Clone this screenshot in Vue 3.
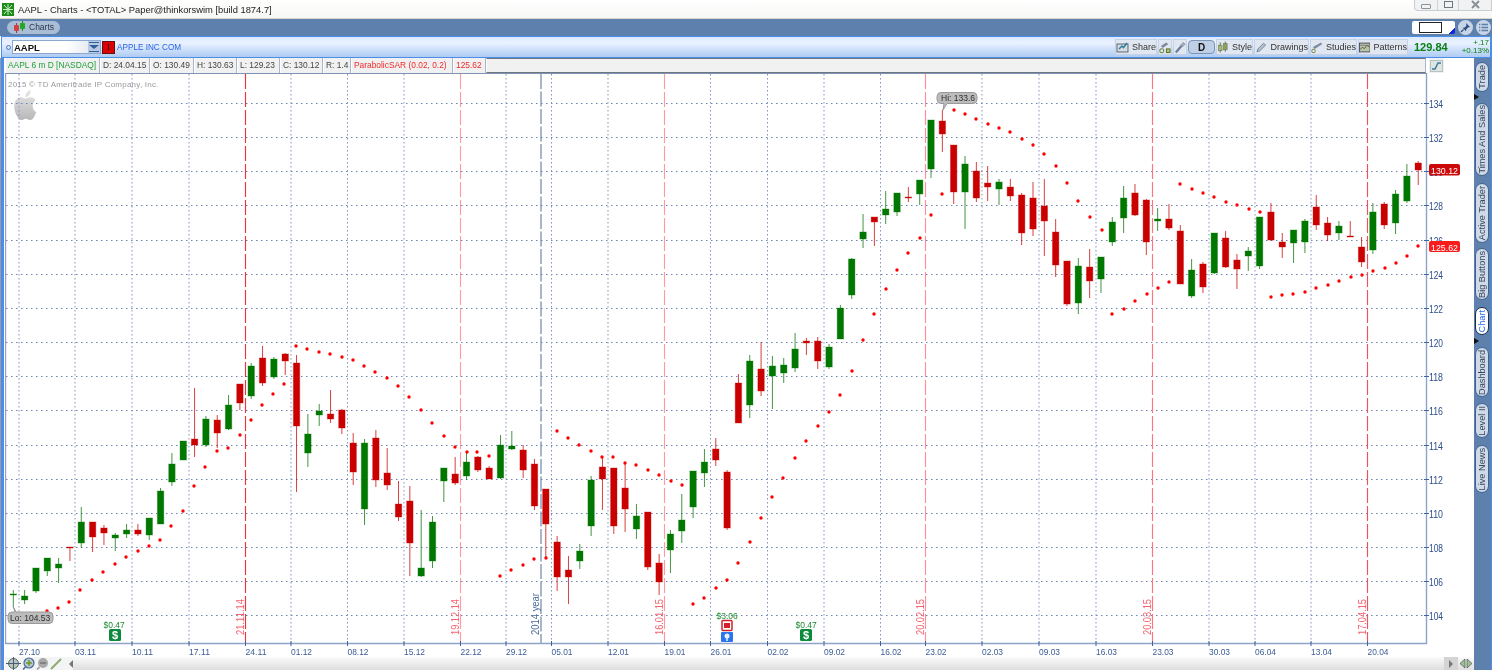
<script setup>
const raw = `g 594 595 590 606|g 596 600 590 604|g 568 591 568 593|g 558 571 558 576|g 564 568 558 583|r 547 548 547 561|g 522 543 507 548|r 522 537 522 552|r 528 533 525 545|g 535 538 533 551|g 530 534 524 538|r 530 534 524 536|g 518 535 518 540|g 491 524 488 524|g 464 482 453 486|g 441 460 441 460|r 439 445 388 457|g 419 445 416 447|r 420 433 415 448|g 405 429 395 430|r 384 403 384 410|g 366 396 363 399|r 358 383 346 386|g 359 377 357 379|r 354 361 353 375|r 363 426 355 492|g 434 453 414 467|g 411 415 404 426|r 414 419 390 423|r 410 428 409 434|r 443 472 433 485|g 443 509 439 525|r 438 480 430 487|r 473 485 448 490|r 504 517 481 521|r 501 543 486 576|g 568 576 510 577|g 522 561 516 568|g 468 481 468 502|r 474 483 457 485|g 462 476 453 480|r 457 470 456 472|r 468 479 466 479|g 445 478 435 479|g 446 449 431 450|r 450 470 445 478|r 464 506 459 510|r 489 524 489 558|r 542 577 536 591|r 570 577 556 604|g 551 561 544 569|g 480 526 476 536|r 467 479 457 510|r 468 526 468 534|r 488 509 464 532|g 516 529 504 539|r 512 567 512 570|r 563 582 554 595|g 534 550 530 573|g 520 531 494 543|g 471 507 471 518|g 462 473 449 487|r 449 460 438 466|r 472 528 470 530|r 383 423 374 423|g 361 405 355 418|r 369 391 342 396|g 366 376 356 409|g 365 373 358 383|g 349 368 333 372|r 341 343 338 355|r 341 361 337 369|g 347 367 344 369|g 308 339 305 339|g 259 295 258 299|g 232 239 214 248|r 217 222 217 246|g 209 215 191 224|g 193 212 193 216|r 197 198 187 202|g 180 194 180 205|g 120 169 120 178|r 121 134 110 152|r 145 192 145 204|g 164 192 156 229|r 171 198 162 202|r 183 187 166 201|g 182 189 179 205|r 187 196 179 201|r 195 233 193 245|r 198 229 182 236|r 206 221 179 256|r 232 265 219 277|r 261 304 261 306|g 266 303 258 314|r 267 281 249 298|g 257 279 257 293|g 222 242 217 246|g 198 218 186 233|r 193 215 184 216|r 200 242 199 255|g 219 221 208 231|r 219 228 204 230|r 231 284 225 284|g 270 296 259 298|r 264 287 262 293|g 233 273 233 274|r 238 267 231 268|r 260 269 254 289|g 251 256 247 271|g 217 266 217 269|r 212 240 203 241|r 242 247 233 258|g 230 243 230 263|g 221 242 219 253|r 207 225 195 230|r 223 235 217 241|g 226 233 221 240|r 236 237 221 237|r 247 262 237 267|g 212 250 203 254|r 204 225 202 229|g 194 223 190 234|g 176 201 164 203|r 163 170 161 185`
const candles = raw.split('|').map((s, i) => {
  const [c, t, b, wt, wb] = s.split(' ')
  return { id: i, x: 13.3 + i * 11.33, c, t: +t, b: +b, wt: +wt, wb: +wb }
})
const sar = `47,611 58,608 69,602 80,590 92,580 103,572 115,564 126,557 138,551 149,546 160,540 171,526 183,511 194,486 205,467 217,451 228,448 240,435 251,420 262,405 273,394 284,384 296,346 307,349 319,352 330,354 342,357 353,360 364,366 375,372 387,378 398,386 409,397 421,410 432,423 444,436 455,447 467,452 477,452 489,456 500,576 511,570 523,565 534,559 546,558 557,431 568,438 579,445 591,451 602,457 613,457 625,463 636,465 648,470 659,475 671,481 682,485 693,604 704,598 716,588 727,580 738,563 750,542 761,518 772,497 783,478 795,458 806,441 818,426 829,412 840,395 852,371 863,340 874,314 886,289 897,270 908,253 920,238 931,215 942,194 954,110 965,114 976,119 988,124 999,128 1010,132 1022,139 1033,145 1044,154 1056,166 1067,183 1078,201 1090,217 1102,230 1112,314 1124,309 1135,301 1147,294 1158,288 1169,282 1180,184 1192,189 1203,193 1214,197 1226,202 1237,205 1249,209 1260,212 1271,297 1282,295 1293,294 1305,292 1316,288 1328,285 1339,281 1351,277 1362,275 1373,271 1385,268 1396,263 1407,256 1418,246`
  .split(' ').map(p => p.split(',').map(Number))
const prices = Array.from({ length: 16 }, (_, i) => {
  const p = 134 - i * 2
  return { p, y: Math.round(103 + i * 34.15) + 0.5 }
})
const dates = [['27.10',19],['03.11',75],['10.11',132],['17.11',189],['24.11',245.5],['01.12',291],['08.12',347.5],['15.12',404],['22.12',460.5],['29.12',506],['05.01',551.5],['12.01',608],['19.01',664.5],['26.01',710.5],['02.02',767.5],['09.02',824],['16.02',880.5],['23.02',925.5],['02.03',982],['09.03',1039],['16.03',1096],['23.03',1152.5],['30.03',1209],['06.04',1255],['13.04',1311],['20.04',1367.5]]
const redLines = [[245.5,'#ec3340','21.11.14'],[460.5,'#ff9aa2','19.12.14'],[664.5,'#ff9aa2','16.01.15'],[925.5,'#ff8f98','20.02.15'],[1152.5,'#ff7480','20.03.15'],[1367.5,'#f3505e','17.04.15']]
const redX = new Set(redLines.map(r => r[0]))
const grid = dates.map(d => d[1]).filter(x => !redX.has(x))
const cells = [
  ['AAPL 6 m D [NASDAQ]', 'g', 95], ['D: 24.04.15', '', 50], ['O: 130.49', '', 44], ['H: 130.63', '', 43], ['L: 129.23', '', 43], ['C: 130.12', '', 43], ['R: 1.4', '', 28], ['ParabolicSAR (0.02, 0.2)', 'r', 102], ['125.62', 'r', 33]
]
const tabs = [['Trade', 30, 11], ['Times And Sales', 73, 7], ['Active Trader', 60, 5], ['Big Buttons', 52, 7], ['Chart', 28, 12], ['Dashboard', 50, 6], ['Level II', 35, 7], ['Live News', 48, 0]]
</script>

<template>
  <div class="app">
    <header class="title">
      <svg class="logo" width="12" height="13" viewBox="0 0 12 13">
        <rect width="12" height="13" fill="#1a8a1a" />
        <path d="M2 2l8 9M10 2L2 11M6 1v11M1 6.5h10" stroke="#c8f0c0" stroke-width="1" />
      </svg>
      <span class="title-text">AAPL - Charts - &lt;TOTAL&gt; Paper@thinkorswim [build 1874.7]</span>
      <div class="winctl">
        <span class="wbtn w1"><i class="min"></i></span>
        <span class="wbtn w2"><i class="rest"></i></span>
        <span class="wbtn w3">
          <svg width="9" height="9" viewBox="0 0 9 9"><path d="M1 1l7 7M8 1L1 8" stroke="#8b9097" stroke-width="2" fill="none" /></svg>
        </span>
      </div>
    </header>

    <div class="tabbar">
      <div class="pill">
        <svg width="13" height="13" viewBox="0 0 13 13">
          <path d="M3.5 2v10" stroke="#b33" /><rect x="1" y="4" width="5" height="6" rx="1" fill="#c44" />
          <path d="M9.5 0v10" stroke="#282" /><rect x="7" y="2" width="5" height="6" rx="1" fill="#2a2" />
        </svg>
        <span>Charts</span>
      </div>
      <div class="spacer"></div>
      <div class="colorbox"><i></i></div>
      <span class="round">
        <svg width="11" height="11" viewBox="0 0 11 11"><path d="M6 1l4 4-2 .6-1.700 1.700-.3 2L2.700 5.700l2-.3L6.400 3.700z" fill="#2d4f80" /><path d="M3.500 7.500L1 10" stroke="#2d4f80" stroke-width="1.200" /></svg>
      </span>
      <span class="round">
        <svg width="11" height="11" viewBox="0 0 11 11"><path d="M3.500 2.500H10M3.500 5.500H10M3.500 8.500H10" stroke="#5d7fab" stroke-width="1.500" /><path d="M1 2.500h1.300M1 5.500h1.300M1 8.500h1.300" stroke="#5d7fab" stroke-width="1.500" /></svg>
      </span>
    </div>

    <div class="toolbar">
      <i class="dot"></i>
      <div class="symbol"><b>AAPL</b><span class="drop">
        <svg width="12" height="11" viewBox="0 0 12 11"><path d="M1 0h10v1H1zM1 3h10L6 7zM1 9h10v1H1z" fill="#345f96" /></svg>
      </span></div>
      <span class="flag">1</span>
      <span class="company">APPLE INC COM</span>
      <div class="spacer"></div>
      <div class="tools">
        <span class="tb" style="width: 42px">
          <svg width="13" height="12" viewBox="0 0 13 12"><rect x="1" y="3" width="11" height="8" fill="#d8dde4" stroke="#5b6776" /><path d="M3 8l3-3 1.500 1.500L11 2" stroke="#2e7d9a" stroke-width="1.500" fill="none" /></svg>
          Share</span>
        <span class="tb" style="width: 14px">
          <svg width="13" height="13" viewBox="0 0 13 13"><path d="M2 5l6-4 2 2-6 4z" fill="#7b8aa0" /><rect x="1" y="8" width="4" height="4" rx="1" fill="none" stroke="#587021" /><rect x="8" y="8" width="4" height="4" fill="#a8c080" stroke="#587021" /></svg>
        </span>
        <span class="tb" style="width: 14px">
          <svg width="13" height="13" viewBox="0 0 13 13"><path d="M2 12l6-7" stroke="#6c7e95" stroke-width="2.500" /><path d="M7 4l3-3 2 2-3 3z" fill="#a2b0c0" stroke="#66738a" stroke-width=".6" /></svg>
        </span>
        <span class="dbtn">D</span>
        <span class="tb" style="width: 37px">
          <svg width="13" height="13" viewBox="0 0 13 13"><path d="M3.500 1v11M9 0v11" stroke="#5a6a50" /><rect x="1.500" y="4" width="4" height="6" fill="#a8b878" stroke="#67754f" stroke-width=".6" /><rect x="7" y="2" width="4" height="7" fill="#8fa05e" stroke="#67754f" stroke-width=".6" /></svg>
          Style</span>
        <span class="tb" style="width: 55px">
          <svg width="13" height="13" viewBox="0 0 13 13"><path d="M2 11l1-3 6-6 2 2-6 6z" fill="#b3c0d0" stroke="#55677f" stroke-width=".7" /></svg>
          Drawings</span>
        <span class="tb" style="width: 47px">
          <svg width="13" height="13" viewBox="0 0 13 13"><path d="M2 6l9-5 1 2-8 5z" fill="#7c8ba3" /><rect x="1" y="8.500" width="3.500" height="3.500" rx="1" fill="none" stroke="#6c7f3a" /></svg>
          Studies</span>
        <span class="tb" style="width: 50px">
          <svg width="13" height="13" viewBox="0 0 13 13"><rect x=".5" y="1.500" width="12" height="10" fill="#b9c4a6" stroke="#445" /><path d="M1 9l3-3 2 2 3-4 3 2" stroke="#553" fill="none" /><path d="M1 4h11" stroke="#778" /></svg>
          Patterns</span>
      </div>
      <b class="last">129.84</b>
      <div class="change"><span>+.17</span><span>+0.13%</span></div>
    </div>

    <div class="body">
      <main class="main">
        <div class="inforow">
          <span v-for="c in cells" :key="c[0]" class="cell" :class="c[1]" :style="{ width: c[2] + 'px' }">{{ c[0] }}</span>
          <span class="cell rest"></span>
          <span class="modebtn">
            <svg width="13" height="12" viewBox="0 0 13 12"><rect x=".5" y=".5" width="12" height="11" fill="#dfe7dd" stroke="#b7c0c8" /><path d="M2 9h3l3-6h3" stroke="#3a78a8" stroke-width="1.500" fill="none" /></svg>
          </span>
        </div>
        <svg class="chart" width="1469" height="584" viewBox="5 73 1469 584">
          <defs>
            <linearGradient id="ap" x1="0" y1="0" x2="0" y2="1">
              <stop offset="0" stop-color="#e6e6e6" /><stop offset="1" stop-color="#b8b8b8" />
            </linearGradient>
          </defs>

          <text class="copy" x="8" y="87">2015 © TD Ameritrade IP Company, Inc.</text>
          <path transform="translate(7.900 85) scale(1.450 1.670)" fill="url(#ap)" d="M17.050 20.280c-.98.95-2.050.8-3.080.35-1.090-.46-2.090-.48-3.240 0-1.440.62-2.200.44-3.060-.35C2.790 15.250 3.510 7.590 9.050 7.310c1.350.07 2.290.74 3.080.8 1.180-.24 2.310-.93 3.570-.84 1.510.12 2.650.72 3.400 1.800-3.120 1.870-2.380 5.980.48 7.130-.57 1.500-1.310 2.990-2.540 4.090zM12.030 7.250c-.15-2.230 1.660-4.070 3.740-4.250.29 2.580-2.340 4.500-3.740 4.250z" />

          <line v-for="p in prices" :key="'h' + p.p" class="hgrid" x1="6" x2="1426" :y1="p.y" :y2="p.y" />
          <line v-for="x in grid" :key="'v' + x" class="vgrid" :x1="x" :x2="x" y1="74" y2="643" />
          <line v-for="r in redLines" :key="r[2]" class="vred" :stroke="r[1]" :x1="r[0]" :x2="r[0]" y1="74" y2="643" />
          <line class="vblue" x1="541" x2="541" y1="74" y2="643" />

          <g v-for="c in candles" :key="c.id">
            <line class="wick" :class="c.c" :x1="c.x" :x2="c.x" :y1="c.wt" :y2="c.wb" />
            <rect class="bodyc" :class="c.c" :x="c.x - 3.200" :y="c.t" width="6.400" :height="c.b - c.t" />
          </g>
          <circle v-for="(d, i) in sar" :key="'s' + i" :cx="d[0]" :cy="d[1]" r="1.700" fill="#ff0000" />

          <line class="axis" x1="5.500" x2="5.500" y1="73" y2="643" />
          <line class="axis" x1="5" x2="1427" y1="643.500" y2="643.500" />
          <line class="axis" x1="1426.500" x2="1426.500" y1="73" y2="644" />
          <line class="topline" x1="5" x2="1427" y1="73.500" y2="73.500" />
          <g v-for="p in prices" :key="'t' + p.p">
            <line class="tick" x1="1424" x2="1429" :y1="p.y" :y2="p.y" />
            <text class="axlabel" x="1429" :y="p.y + 4" textLength="14" lengthAdjust="spacingAndGlyphs">{{ p.p }}</text>
          </g>
          <rect x="1429" y="164" width="31" height="11.500" rx="2" fill="#cc0a0a" />
          <text class="pricetag" x="1431" y="173.500" textLength="27" lengthAdjust="spacingAndGlyphs">130.12</text>
          <rect x="1429" y="241" width="31" height="11" rx="2" fill="#f81c1c" />
          <text class="pricetag" x="1431" y="250.500" textLength="27" lengthAdjust="spacingAndGlyphs">125.62</text>

          <g v-for="d in dates" :key="d[0]">
            <line class="tick" :x1="d[1]" :x2="d[1]" y1="641" y2="646" />
            <text class="dlabel" :x="d[1]" y="654.500" textLength="21" lengthAdjust="spacingAndGlyphs">{{ d[0] }}</text>
          </g>
          <text v-for="r in redLines" :key="'l' + r[2]" class="vlabel" :transform="`translate(${r[0] - 2} 635) rotate(-90)`" textLength="36" lengthAdjust="spacingAndGlyphs">{{ r[2] }}</text>
          <text class="vlabel bl" transform="translate(538.500 635) rotate(-90)" textLength="42" lengthAdjust="spacingAndGlyphs">2014 year</text>

          <text class="ev" x="103.500" y="628">$0.47</text>
          <rect x="109" y="629" width="12" height="12" rx="1.500" fill="#0a8a3c" />
          <text class="evs" x="115" y="639">$</text>
          <text class="ev" x="716.500" y="619">$3.06</text>
          <rect x="722" y="620.500" width="10" height="10" rx="1" fill="#fff" stroke="#d4202a" stroke-width="1.500" />
          <rect x="724" y="623" width="6" height="5" fill="#d4202a" />
          <rect x="721" y="632" width="12" height="10" rx="1" fill="#2a74f0" />
          <circle cx="727" cy="636" r="2.500" fill="#e8f2ff" /><path d="M727 638v3" stroke="#e8f2ff" stroke-width="1.500" />
          <text class="ev" x="795.500" y="628">$0.47</text>
          <rect x="800" y="629" width="12" height="12" rx="1.500" fill="#0a8a3c" />
          <text class="evs" x="806" y="639">$</text>

          <path class="bubble" d="M13 606 l3 6 h33 q4 0 4 4 v3.500 q0 4-4 4 H12 q-4 0-4-4 V616 q0-4 4-4 h3z" />
          <text class="bubtext" x="10" y="621">Lo: 104.53</text>
          <path class="bubble" d="M943 110 l1-6.500 h-3 q-4 0-4-4 v-3 q0-4 4-4 h32 q4 0 4 4 v3 q0 4-4 4 h-26z" />
          <text class="bubtext" x="941" y="100.700">Hi: 133.6</text>
        </svg>
        <footer class="bottombar">
          <div class="bl-tools">
            <svg width="17" height="13" viewBox="0 0 17 13"><circle cx="8.500" cy="6.500" r="5" fill="#b7c4c2" stroke="#5a6d66" /><path d="M8.500 0v13M1 6.500h15" stroke="#4a5d6e" /></svg>
            <svg width="14" height="13" viewBox="0 0 14 13"><circle cx="7" cy="6" r="5" fill="#b6c6d6" stroke="#486b93" stroke-width="1.200" /><path d="M7 3v6M4 6h6" stroke="#6f9a26" stroke-width="1.500" /><path d="M3.500 10L1 12.500" stroke="#486b93" stroke-width="1.500" /></svg>
            <svg width="13" height="13" viewBox="0 0 13 13"><circle cx="7" cy="6" r="5" fill="#a8a8a8" /><path d="M4 6h6" stroke="#777" stroke-width="1.500" /><path d="M3.500 10L1 12.500" stroke="#999" stroke-width="1.500" /></svg>
            <svg class="pen" width="14" height="13" viewBox="0 0 14 13"><path d="M2 12L12 2" stroke="#8fa86c" stroke-width="2" /></svg>
            <span class="tri left"></span>
          </div>
          <div class="spacer"></div>
          <span class="scrollbtn"><span class="tri right"></span></span>
          <svg width="12" height="13" viewBox="0 0 12 13"><path d="M5 2L0 6.500 5 11zM7 2l5 4.500L7 11z" fill="#9fc183" stroke="#456" stroke-width=".7" /></svg>
        </footer>
      </main>
      <aside class="side">
        <i class="mark m1"></i><i class="mark m2"></i>
        <span v-for="t in tabs" :key="t[0]" class="vtab" :class="{ on: t[0] === 'Chart' }" :style="{ height: t[1] + 'px', marginBottom: t[2] + 'px' }"><span>{{ t[0] }}</span></span>
      </aside>
    </div>
  </div>
</template>

<style>
html, body { margin: 0; background: #fff; overflow: hidden; }
</style>

<style scoped>
.app {
  width: 1492px; height: 670px; display: flex; flex-direction: column; overflow: hidden;
  font-family: "Liberation Sans", Arial, sans-serif; color: #333; background: #fff;
  filter: blur(0.35px);
}
.spacer { flex: 1; }
.title {
  height: 18px; flex: none; display: flex; align-items: center; padding-left: 2px; gap: 4px; position: relative;
  background: linear-gradient(#fff, #f6f6f5); border-bottom: 1px solid #d9d5cc;
}
.title-text { font-size: 9.4px; color: #222; letter-spacing: 0; }
.winctl {
  position: absolute; right: 0; top: -1px; width: 78px; height: 12px; display: flex;
  border: 1px solid #c9cdd2; border-top: 0; border-radius: 0 0 0 4px; background: #f1f2f3; box-sizing: border-box;
}
.wbtn { display: flex; align-items: center; justify-content: center; border-right: 1px solid #cfd3d6; }
.w1 { width: 22px; } .w2 { width: 20px; } .w3 { flex: 1; border-right: 0; }
.min { width: 8px; height: 3px; border: 1px solid #8d9299; border-radius: 1px; margin-top: 3px; }
.rest { width: 7px; height: 5px; border: 1px solid #70767e; }

.tabbar {
  height: 17px; flex: none; display: flex; align-items: center; background: #5d80ad; padding: 0 1px 1px 7px; box-sizing: border-box; gap: 0;
}
.pill {
  width: 53px; height: 13px; border-radius: 7px; background: #a9bdd6; display: flex; align-items: center; gap: 3px; padding-left: 6px; box-sizing: border-box;
  font-size: 8.5px; color: #2c3a4e;
}
.colorbox {
  width: 43px; height: 13px; position: relative; border-radius: 2px; margin-right: 3px;
  background: linear-gradient(135deg, #fff 88%, #1028e0 88%);
}
.colorbox i { position: absolute; left: 7px; top: 1px; width: 21px; height: 9px; border: 1px solid #222; }
.round { width: 15px; height: 15px; border-radius: 50%; background: #c7d5e6; display: flex; align-items: center; justify-content: center; }
.round + .round { margin-left: 3px; }

.toolbar {
  height: 20px; flex: none; display: flex; align-items: center; padding-left: 4px; padding-right: 1px;
  background: linear-gradient(#dbe9fd, #eaf2fe 30%, #c7dcf9 70%, #aecbf3);
  border: 1px solid #4c8de8; border-width: 1px 2px 1px 1px; margin-left: 1px;
}
.dot { width: 3px; height: 3px; border: 1px solid #5078c0; border-radius: 50%; margin-right: 1px; }
.symbol {
  width: 89px; height: 14px; display: flex; align-items: center; justify-content: space-between; box-sizing: border-box; flex: none;
  background: linear-gradient(90deg, #fff 60%, #dbe3ee); border: 1px solid #8ba8cf; font-size: 9.5px; color: #111; padding-left: 1px;
}
.drop { width: 12px; height: 12px; background: #b8cbe4; display: flex; align-items: center; justify-content: center; }
.flag { width: 11px; height: 11px; margin-left: 1px; background: #dd0000; color: #111; border: 1px solid #611; font: 9px "Liberation Serif", serif; text-align: center; line-height: 11px; }
.company { margin-left: 2px; font-size: 8.2px; color: #2b65e8; }
.tools { display: flex; align-items: center; gap: 1px; margin-right: 6px; }
.tb {
  height: 16px; display: flex; align-items: center; justify-content: center; gap: 3px; box-sizing: border-box;
  background: #e0e7f0; border: 1px solid #c3d2e6; font-size: 9px; color: #333; white-space: nowrap; overflow: hidden;
}
.dbtn { width: 27px; height: 14px; border-radius: 4px; background: #bfd0e6; border: 1px solid #7d94b2; text-align: center; font: bold 10px/13px "Liberation Sans", sans-serif; color: #111; box-sizing: border-box; }
.last { width: 48px; font-size: 11px; color: #087f10; }
.change { width: 27px; display: flex; flex-direction: column; align-items: flex-end; font-size: 8px; line-height: 8.5px; color: #087f10; white-space: nowrap; }

.body { flex: 1; display: flex; min-height: 0; }
.main { flex: 1; display: flex; flex-direction: column; min-width: 0; padding-left: 5px; position: relative; }
.main::before { content: ""; position: absolute; left: 0; top: 0; bottom: 0; width: 4px; background: #4c8de8; border-left: 1px solid #99a; box-sizing: border-box; }
.inforow { height: 15px; flex: none; display: flex; }
.cell { box-sizing: border-box; height: 15px; background: #f1f1f1; border-right: 1px solid #a9b6c9; border-left: 1px solid #fff; font-size: 8.4px; line-height: 15px; padding-left: 2px; color: #444; white-space: nowrap; overflow: hidden; }
.cell.g { color: #22a03a; }
.cell.r { color: #f02a2a; }
.cell.rest { width: 940px; }
.modebtn { margin-left: 3px; width: 15px; height: 15px; display: flex; align-items: center; justify-content: center; background: #eef2f4; }
.chart { flex: none; display: block; }
.copy { font-size: 8px; letter-spacing: .22px; fill: #9a9a9a; }
.hgrid { stroke: #6d85b0; stroke-dasharray: 1.500 3.500; stroke-width: 1; }
.vgrid { stroke: #7f95bc; stroke-dasharray: 1.500 2.500; stroke-width: 1; }
.vred { stroke-dasharray: 15 3; stroke-width: 1.150; }
.vblue { stroke: #6d86ad; stroke-dasharray: 15 2.500; stroke-width: 1.200; }
.wick { stroke-width: 1; stroke-opacity: .75; }
.wick.g { stroke: #067206; }
.wick.r { stroke: #c80000; }
.bodyc { stroke-width: 1; stroke-opacity: .35; }
.bodyc.g { fill: #007800; stroke: #007800; }
.bodyc.r { fill: #ca0000; stroke: #ca0000; }
.axis { stroke: #8ea3c7; stroke-width: 1.400; }
.topline { stroke: #7f93b4; stroke-width: 1; }
.tick { stroke: #3f62a0; stroke-width: 1; }
.axlabel { font-size: 10px; fill: #2c4d88; }
.pricetag { font-size: 9.500px; fill: #fff; }
.dlabel { font-size: 9.500px; fill: #3b5c94; }
.vlabel { font-size: 10.500px; fill: #f7636e; }
.vlabel.bl { fill: #4a6a9a; }
.ev { font-size: 8.500px; fill: #1a8a30; }
.evs { font-size: 11px; font-weight: bold; fill: #fff; text-anchor: middle; }
.bubble { fill: #bcbcbc; stroke: #999; stroke-width: 1; }
.bubtext { font-size: 8.500px; fill: #2c2c2c; }

.bottombar { height: 13px; flex: none; display: flex; align-items: center; background: linear-gradient(#fafafa, #dedede); padding-right: 2px; }
.bl-tools { display: flex; align-items: center; height: 13px; background: #f2f4f6; gap: 0; }
.tri { width: 0; height: 0; border: 4px solid transparent; }
.tri.left { border-right-color: #777; margin-left: 2px; }
.tri.right { border-left-color: #777; margin-left: 3px; }
.scrollbtn { width: 14px; height: 13px; background: #d4d4d4; display: flex; align-items: center; justify-content: center; margin-right: 2px; }

.side {
  width: 18px; flex: none; position: relative; background: #5d80ad; border-right: 1px solid #4c8de8; box-sizing: border-box;
  display: flex; flex-direction: column; align-items: center; padding: 4px 1px 0 0;
}
.mark { position: absolute; left: 0; width: 0; height: 0; border: 3px solid transparent; border-left: 5px solid #111; }
.m1 { top: 36px; } .m2 { top: 280px; }
.vtab {
  width: 14px; flex: none; border-radius: 7px; background: #cfdae8; border: 1px solid #40618f; box-sizing: border-box;
  display: flex; align-items: center; justify-content: center; overflow: hidden;
}
.vtab span { writing-mode: vertical-rl; transform: rotate(180deg); font-size: 9.2px; color: #37475c; white-space: nowrap; }
.vtab.on { background: #fff; border: 1.500px solid #1d2d44; }
.vtab.on span { color: #2d6ae8; }
</style>
